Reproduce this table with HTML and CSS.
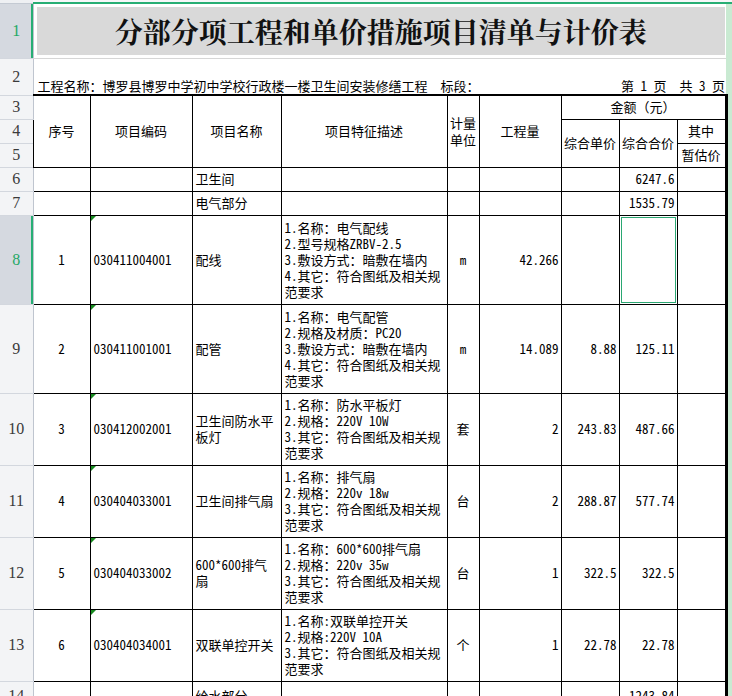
FILE: index.html
```html
<!DOCTYPE html>
<html lang="zh-CN">
<head>
<meta charset="utf-8">
<title>分部分项工程和单价措施项目清单与计价表</title>
<link rel="stylesheet" href="styles.css">
</head>
<body>
<div class="sheet">
  <div class="colhdr"><div class="colhdr-corner"></div><div class="colhdr-bar"></div></div>
  <table class="grid">
    <colgroup>
      <col class="w-rh"><col class="w1"><col class="w2"><col class="w3"><col class="w4"><col class="w5"><col class="w6"><col class="w7"><col class="w8"><col class="w9"><col class="w-edge">
    </colgroup>
    <tr class="r-title">
      <th class="rh sel">1</th>
      <td colspan="9" class="title-cell"><div class="title">分部分项工程和单价措施项目清单与计价表</div></td>
      <td class="edge"></td>
    </tr>
    <tr class="r-info">
      <th class="rh">2</th>
      <td colspan="9" class="info-cell"><div class="info"><span>工程名称：博罗县博罗中学初中学校行政楼一楼卫生间安装修缮工程　标段：</span><span>第 1 页　共 3 页</span></div></td>
      <td class="edge"></td>
    </tr>
    <tr class="r-s">
      <th class="rh">3</th>
      <td rowspan="3" class="c ctr">序号</td>
      <td rowspan="3" class="c ctr">项目编码</td>
      <td rowspan="3" class="c ctr">项目名称</td>
      <td rowspan="3" class="c ctr">项目特征描述</td>
      <td rowspan="3" class="c ctr unit-h">计量<br>单位</td>
      <td rowspan="3" class="c ctr">工程量</td>
      <td colspan="3" class="c ctr last">金额（元）</td>
      <td class="edge"></td>
    </tr>
    <tr class="r-s">
      <th class="rh">4</th>
      <td rowspan="2" class="c ctr">综合单价</td>
      <td rowspan="2" class="c ctr">综合合价</td>
      <td class="c ctr last">其中</td>
      <td class="edge"></td>
    </tr>
    <tr class="r-s">
      <th class="rh">5</th>
      <td class="c ctr last">暂估价</td>
      <td class="edge"></td>
    </tr>
    <tr class="r-s">
      <th class="rh">6</th>
      <td class="c"></td><td class="c"></td><td class="c l">卫生间</td><td class="c"></td><td class="c"></td><td class="c"></td><td class="c"></td><td class="c num">6247.6</td><td class="c last"></td>
      <td class="edge"></td>
    </tr>
    <tr class="r-s">
      <th class="rh">7</th>
      <td class="c"></td><td class="c"></td><td class="c l">电气部分</td><td class="c"></td><td class="c"></td><td class="c"></td><td class="c"></td><td class="c num">1535.79</td><td class="c last"></td>
      <td class="edge"></td>
    </tr>
    <tr class="r-xl">
      <th class="rh sel">8</th>
      <td class="c ctr">1</td><td class="c l code">030411004001</td><td class="c l">配线</td>
      <td class="c l desc">1.名称：电气配线
2.型号规格ZRBV-2.5
3.敷设方式：暗敷在墙内
4.其它：符合图纸及相关规
范要求</td>
      <td class="c ctr">m</td><td class="c num">42.266</td><td class="c num"></td><td class="c num active"></td><td class="c last"></td>
      <td class="edge"></td>
    </tr>
    <tr class="r-xl">
      <th class="rh">9</th>
      <td class="c ctr">2</td><td class="c l code">030411001001</td><td class="c l">配管</td>
      <td class="c l desc">1.名称：电气配管
2.规格及材质：PC20
3.敷设方式：暗敷在墙内
4.其它：符合图纸及相关规
范要求</td>
      <td class="c ctr">m</td><td class="c num">14.089</td><td class="c num">8.88</td><td class="c num">125.11</td><td class="c last"></td>
      <td class="edge"></td>
    </tr>
    <tr class="r-l">
      <th class="rh">10</th>
      <td class="c ctr">3</td><td class="c l code">030412002001</td><td class="c l desc">卫生间防水平
板灯</td>
      <td class="c l desc">1.名称：防水平板灯
2.规格：220V 10W
3.其它：符合图纸及相关规
范要求</td>
      <td class="c ctr">套</td><td class="c num">2</td><td class="c num">243.83</td><td class="c num">487.66</td><td class="c last"></td>
      <td class="edge"></td>
    </tr>
    <tr class="r-l">
      <th class="rh">11</th>
      <td class="c ctr">4</td><td class="c l code">030404033001</td><td class="c l">卫生间排气扇</td>
      <td class="c l desc">1.名称：排气扇
2.规格：220v 18w
3.其它：符合图纸及相关规
范要求</td>
      <td class="c ctr">台</td><td class="c num">2</td><td class="c num">288.87</td><td class="c num">577.74</td><td class="c last"></td>
      <td class="edge"></td>
    </tr>
    <tr class="r-l">
      <th class="rh">12</th>
      <td class="c ctr">5</td><td class="c l code">030404033002</td><td class="c l desc">600*600排气
扇</td>
      <td class="c l desc">1.名称：600*600排气扇
2.规格：220v 35w
3.其它：符合图纸及相关规
范要求</td>
      <td class="c ctr">台</td><td class="c num">1</td><td class="c num">322.5</td><td class="c num">322.5</td><td class="c last"></td>
      <td class="edge"></td>
    </tr>
    <tr class="r-l">
      <th class="rh">13</th>
      <td class="c ctr">6</td><td class="c l code">030404034001</td><td class="c l">双联单控开关</td>
      <td class="c l desc">1.名称:双联单控开关
2.规格:220V 10A
3.其它：符合图纸及相关规
范要求</td>
      <td class="c ctr">个</td><td class="c num">1</td><td class="c num">22.78</td><td class="c num">22.78</td><td class="c last"></td>
      <td class="edge"></td>
    </tr>
    <tr class="r-m">
      <th class="rh">14</th>
      <td class="c"></td><td class="c"></td><td class="c l">给水部分</td><td class="c"></td><td class="c"></td><td class="c"></td><td class="c"></td><td class="c num">1243.84</td><td class="c last"></td>
      <td class="edge"></td>
    </tr>
  </table>
</div>
</body>
</html>
```
FILE: styles.css
```css
html, body {
  margin: 0;
  padding: 0;
  background: #ffffff;
}
.sheet {
  width: 732px;
  height: 696px;
  overflow: hidden;
  position: relative;
}
.colhdr {
  display: flex;
  height: 4px;
}
.colhdr-corner {
  width: 33px;
  background: #eef0f3;
  border-bottom: 1px solid #c4cad3;
  box-sizing: border-box;
}
.colhdr-bar {
  flex: 1;
  background: #f6f7f8;
  border-bottom: 2px solid #27ae74;
  box-sizing: border-box;
}
.grid {
  border-collapse: collapse;
  table-layout: fixed;
  width: 732px;
  font-family: "Noto Sans Mono CJK SC", "Noto Sans CJK SC", monospace;
  font-size: 13px;
  line-height: 16px;
  color: #000;
}
.w-rh { width: 33px; }
.w1 { width: 57px; }
.w2 { width: 102px; }
.w3 { width: 89px; }
.w4 { width: 166px; }
.w5 { width: 32px; }
.w6 { width: 82px; }
.w7 { width: 58px; }
.w8 { width: 58px; }
.w9 { width: 49px; }
.w-edge { width: 6px; }

.r-title { height: 54px; }
.r-info { height: 37px; }
.r-s { height: 24px; }
.r-xl { height: 89px; }
.r-l { height: 72px; }
.r-m { height: 30px; }

.rh {
  padding: 0;
  background: #f3f4f6;
  border-right: 1px solid #bfc5cf;
  border-bottom: 1px solid #d3d7de;
  font-family: "Liberation Serif", "DejaVu Serif", serif;
  font-weight: normal;
  font-size: 16px;
  color: #3a3a3a;
  text-align: center;
  vertical-align: middle;
}
.rh.sel {
  background: #d5d9e0;
  color: #1fa866;
  box-shadow: inset -2px 0 0 #27ae74;
}
.edge {
  padding: 0;
  background: #c9ead2;
  border: none;
}
.title-cell {
  padding: 3px 1px 2px 3px;
  border-bottom: 1px solid #d6d6d6;
  vertical-align: top;
}
.title {
  height: 48px;
  background: #d9d9d9;
  display: flex;
  align-items: center;
  justify-content: center;
  font-family: "Noto Serif CJK SC", "Noto Sans CJK SC", serif;
  font-weight: 700;
  font-size: 28px;
  letter-spacing: 0;
  color: #111;
}
.info-cell {
  padding: 0 1px 0 4px;
  vertical-align: bottom;
  border-bottom: 2px solid #000;
}
.info {
  display: flex;
  justify-content: space-between;
  line-height: 15px;
  padding-bottom: 1px;
  white-space: nowrap;
}
.c {
  border: 1px solid #000;
  padding: 0 2px;
  vertical-align: middle;
  overflow: hidden;
}
.c.last {
  border-right: 3px solid #000;
}
.ctr { text-align: center; }
.unit-h { padding: 0; line-height: 17px; }
.l { text-align: left; padding-left: 3px; }
.num { text-align: right; padding-right: 2px; }
.desc { white-space: pre-line; }
.code { position: relative; }
.code::before {
  content: "";
  position: absolute;
  top: 0;
  left: 0;
  border-top: 5px solid #178a1f;
  border-right: 5px solid transparent;
}
.active {
  box-shadow: inset 0 0 0 1px #ffffff, inset 0 0 0 2px #2aa772;
}
```
